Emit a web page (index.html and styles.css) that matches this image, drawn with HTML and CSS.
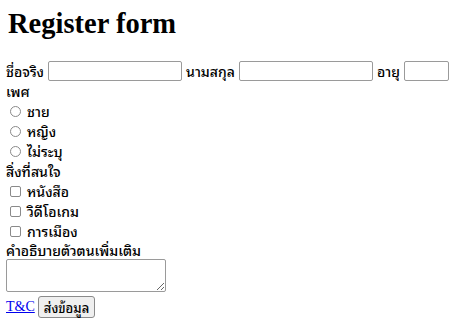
FILE: index.html
```html
<!DOCTYPE html>
<html lang="th">
<head>
<meta charset="utf-8">
<title>Register form</title>
<link rel="stylesheet" href="styles.css">
</head>
<body class="page">
<h1 class="title">Register form</h1>
<form class="form">
  <div class="line names">
    <label class="lbl" for="fn">ชื่อจริง</label>
    <input class="field field-wide" id="fn" type="text">
    <label class="lbl" for="ln">นามสกุล</label>
    <input class="field field-wide" id="ln" type="text">
    <label class="lbl" for="age">อายุ</label>
    <input class="field field-age" id="age" type="text">
  </div>
  <div class="line">เพศ</div>
  <label class="line opt"><span class="radio"></span>ชาย</label>
  <label class="line opt"><span class="radio"></span>หญิง</label>
  <label class="line opt"><span class="radio"></span>ไม่ระบุ</label>
  <div class="line">สิ่งที่สนใจ</div>
  <label class="line opt"><span class="check"></span>หนังสือ</label>
  <label class="line opt"><span class="check"></span>วิดีโอเกม</label>
  <label class="line opt"><span class="check"></span>การเมือง</label>
  <div class="line line-short">คำอธิบายตัวตนเพิ่มเติม</div>
  <div class="area-wrap"><textarea class="area"></textarea></div>
  <div class="actions">
    <a class="link" href="#">T&amp;C</a>
    <button class="btn" type="button">ส่งข้อมูล</button>
  </div>
</form>
</body>
</html>
```
FILE: styles.css
```css
html, body { margin: 0; padding: 0; background: #fff; }
.page {
  margin: 0;
  padding: 0 6px;
  font-family: "Liberation Serif", "Noto Sans Thai", "Noto Sans", sans-serif;
  color: #000;
}
.title {
  margin: 0 0 0 2px;
  padding-top: 7px;
  font-size: 28.5px;
  line-height: 34px;
  font-weight: bold;
  font-family: "Liberation Serif", serif;
}
.form {
  margin-top: 20px;
  font-family: "Noto Sans Thai Looped", "Noto Sans Thai", "Noto Sans", "DejaVu Sans", sans-serif;
  font-size: 14px;
  font-weight: 500;
}
.line {
  display: flex;
  align-items: center;
  height: 20px;
  line-height: 20px;
  white-space: nowrap;
}
.line-short { height: 18px; }
.names { gap: 4px; height: 20px; }
.field {
  box-sizing: border-box;
  height: 20px;
  border: 1px solid #9a9a9a;
  border-radius: 2px;
  padding: 0 2px;
  margin: 0;
  background: #fff;
}
.field-wide { width: 134px; }
.field-age { width: 45px; }
.opt { padding-left: 4px; gap: 6px; }
.radio {
  box-sizing: border-box;
  width: 11px;
  height: 11px;
  border: 1px solid #8a8a8a;
  border-radius: 50%;
  background: #fff;
}
.check {
  box-sizing: border-box;
  width: 11px;
  height: 11px;
  border: 1px solid #8a8a8a;
  border-radius: 2px;
  background: #fff;
}
.area-wrap { display: flex; }
.area {
  box-sizing: border-box;
  width: 160px;
  height: 33px;
  border: 1px solid #9a9a9a;
  border-radius: 2px;
  margin: 0;
  resize: both;
}
.actions {
  display: flex;
  align-items: center;
  gap: 3px;
  margin-top: 4px;
}
.link {
  font-family: "Liberation Serif", serif;
  font-size: 14px;
  font-weight: normal;
  color: #0000ee;
  text-decoration: underline;
}
.btn {
  box-sizing: border-box;
  height: 22px;
  padding: 0 5px;
  border: 1px solid #8a8a8a;
  border-radius: 3px;
  background: #efefef;
  font-family: "Noto Sans Thai Looped", "Noto Sans Thai", "Noto Sans", sans-serif;
  font-size: 13px;
  font-weight: 500;
  color: #000;
}
```
